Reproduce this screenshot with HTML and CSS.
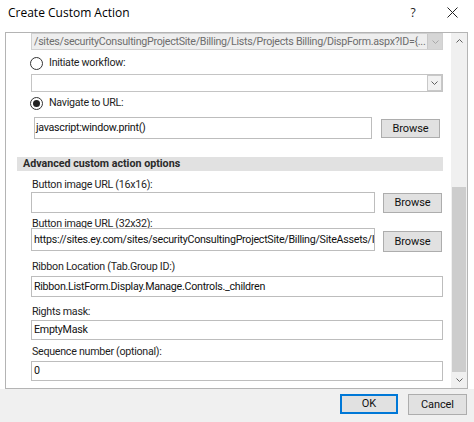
FILE: index.html
```html
<!DOCTYPE html>
<html>
<head>
<meta charset="utf-8">
<link rel="stylesheet" href="styles.css">
</head>
<body>
<div class="dialog">
  <div class="titlebar">
    <span class="title">Create Custom Action</span>
    <span class="help">?</span>
    <span class="close"><svg width="11" height="11" viewBox="0 0 11 11"><path d="M0.5 0.5 L10.5 10.5 M10.5 0.5 L0.5 10.5" stroke="#222" stroke-width="1" fill="none"/></svg></span>
  </div>
  <div class="panel">
    <div class="scroll">
      <div class="content">
        <div class="combo disabled r-top">
          <span class="combo-text">/sites/securityConsultingProjectSite/Billing/Lists/Projects Billing/DispForm.aspx?ID={...</span>
          <span class="combo-btn dis"><svg width="7" height="4" viewBox="0 0 7 4"><path d="M0.5 0.5 L3.5 3.5 L6.5 0.5" stroke="#a8a8a8" fill="none"/></svg></span>
        </div>
        <label class="radio-row r-radio1"><span class="radio"></span><span>Initiate workflow:</span></label>
        <div class="combo r-combo">
          <span class="combo-text"></span>
          <span class="combo-btn"><svg width="7" height="4" viewBox="0 0 7 4"><path d="M0.5 0.5 L3.5 3.5 L6.5 0.5" stroke="#606060" fill="none"/></svg></span>
        </div>
        <label class="radio-row r-radio2"><span class="radio checked"></span><span>Navigate to URL:</span></label>
        <div class="browse-row r-url">
          <div class="input url">javascript:window.print()</div>
          <button class="btn browse b-url">Browse</button>
        </div>
        <div class="section">Advanced custom action options</div>
        <div class="label r-l1">Button image URL (16x16):</div>
        <div class="browse-row r-f1">
          <div class="input short"></div>
          <button class="btn browse b-f1">Browse</button>
        </div>
        <div class="label r-l2">Button image URL (32x32):</div>
        <div class="browse-row r-f2">
          <div class="input short tall">https://sites.ey.com/sites/securityConsultingProjectSite/Billing/SiteAssets/I</div>
          <button class="btn browse b-f2">Browse</button>
        </div>
        <div class="label r-l3">Ribbon Location (Tab.Group ID:)</div>
        <div class="input full r-f3">Ribbon.ListForm.Display.Manage.Controls._children</div>
        <div class="label r-l4">Rights mask:</div>
        <div class="input full r-f4">EmptyMask</div>
        <div class="label r-l5">Sequence number (optional):</div>
        <div class="input full r-f5">0</div>
      </div>
    </div>
    <div class="scrollbar">
      <div class="sb-arrow"><svg width="7" height="4" viewBox="0 0 7 4"><path d="M0.5 3.5 L3.5 0.5 L6.5 3.5" stroke="#606060" fill="none"/></svg></div>
      <div class="sb-track"><div class="sb-thumb"></div></div>
      <div class="sb-arrow"><svg width="7" height="4" viewBox="0 0 7 4"><path d="M0.5 0.5 L3.5 3.5 L6.5 0.5" stroke="#606060" fill="none"/></svg></div>
    </div>
  </div>
  <div class="footer">
    <button class="btn ok">OK</button>
    <button class="btn cancel">Cancel</button>
  </div>
</div>
</body>
</html>
```

FILE: styles.css
```css
* { box-sizing: border-box; }
html, body { margin: 0; padding: 0; }
body {
  width: 474px;
  height: 422px;
  overflow: hidden;
  background: #ffffff;
  font-family: Roboto, "Open Sans", sans-serif;
  font-size: 10.7px;
  letter-spacing: -0.28px;
  color: #1e1e1e;
}
.dialog {
  width: 474px;
  height: 422px;
  display: flex;
  flex-direction: column;
  background: #ffffff;
}
.titlebar {
  height: 32px;
  display: flex;
  align-items: flex-start;
  padding: 4px 0 0 8px;
  letter-spacing: 0;
}
.title {
  flex: 1;
  font-family: "Open Sans", sans-serif;
  font-size: 12px;
  line-height: 17px;
  color: #000;
}
.help {
  width: 20px;
  text-align: center;
  font-family: "Open Sans", sans-serif;
  font-size: 12px;
  line-height: 17px;
  margin-right: 19px;
  color: #222;
}
.close {
  width: 20px;
  height: 17px;
  display: flex;
  align-items: center;
  justify-content: center;
  margin-right: 12px;
}
.panel {
  margin-left: 5px;
  width: 463px;
  height: 357px;
  border: 1px solid #b4b4b4;
  display: flex;
  background: #fff;
}
.scroll {
  flex: 1;
  overflow: hidden;
}
.content {
  display: flex;
  flex-direction: column;
  align-items: flex-start;
  padding-left: 25px;
}
.combo {
  width: 412px;
  display: flex;
  align-items: center;
  border: 1px solid #c4c4c4;
  background: #fff;
  padding: 0 0 0 2px;
}
.combo.disabled {
  background: #eeeeee;
  border-color: #d0d0d0;
  color: #6d6d6d;
  height: 17px;
}
.combo-text {
  flex: 1;
  white-space: nowrap;
  overflow: hidden;
  line-height: 15px;
}
.combo-btn {
  width: 15px;
  height: 15px;
  display: flex;
  align-items: center;
  justify-content: center;
  border-left: 1px solid #d0d0d0;
  background: #f2f2f2;
}
.combo-btn.dis {
  background: #d6d6d6;
  border-left: 1px solid #c8c8c8;
  height: 15px;
}
.r-combo { margin-top: 4px; height: 18px; }
.r-combo .combo-btn { height: 16px; margin-right: 0; border: 1px solid #c8c8c8; }
.radio-row {
  display: flex;
  align-items: center;
  gap: 6px;
  height: 14px;
  line-height: 14px;
  margin-left: -1px;
}
.radio {
  width: 13px;
  height: 13px;
  border: 1px solid #333;
  border-radius: 50%;
  display: flex;
  align-items: center;
  justify-content: center;
  background: #fff;
}
.radio.checked::after {
  content: "";
  width: 7px;
  height: 7px;
  border-radius: 50%;
  background: #222;
}
.r-radio1 { margin-top: 6px; }
.r-radio2 { margin-top: 4px; }
.browse-row {
  display: flex;
  align-items: flex-start;
}
.input {
  border: 1px solid #bdbdbd;
  background: #fff;
  height: 21px;
  line-height: 19px;
  padding: 0 2px;
  white-space: nowrap;
  overflow: hidden;
  color: #111;
}
.input.url { width: 338px; height: 22px; line-height: 20px; padding-left: 1px; }
.r-url { margin-top: 7px; margin-left: 3px; }
.input.short { width: 344px; }
.input.tall { height: 23px; line-height: 21px; }
.input.full { width: 412px; }
.btn {
  font-family: inherit;
  font-size: 11px;
  letter-spacing: -0.1px;
  color: #111;
  background: #e1e1e1;
  border: 1px solid #adadad;
  padding: 0;
  margin: 0;
  height: 20px;
  line-height: 18px;
}
.browse { width: 59px; }
.b-url { margin-left: 9px; margin-top: 2px; height: 19px; }
.b-f1 { margin-left: 8px; margin-top: 1px; }
.b-f2 { margin-left: 8px; margin-top: 3px; height: 21px; }
.section {
  margin-top: 18px;
  margin-left: -14px;
  width: 426px;
  height: 14px;
  line-height: 14px;
  background: #e1e1e1;
  font-weight: bold;
  letter-spacing: 0;
  padding-left: 6px;
  color: #2a2a2a;
}
.label {
  height: 13px;
  line-height: 13px;
  padding-left: 1px;
  color: #1e1e1e;
}
.r-l1 { margin-top: 7px; }
.r-f1 { margin-top: 1px; }
.r-l2 { margin-top: 4px; }
.r-f2 { margin-top: -2px; }
.r-l3 { margin-top: 8px; }
.r-f3 { margin-top: 3px; }
.r-l4 { margin-top: 8px; }
.r-f4 { margin-top: 2px; height: 20px; line-height: 18px; }
.r-l5 { margin-top: 5px; }
.r-f5 { margin-top: 3px; height: 20px; line-height: 18px; }
.scrollbar {
  width: 16px;
  display: flex;
  flex-direction: column;
  background: #f0f0f0;
}
.sb-arrow {
  height: 17px;
  display: flex;
  align-items: center;
  justify-content: center;
}
.sb-track {
  flex: 1;
  display: flex;
  flex-direction: column;
  padding: 0 1px;
}
.sb-thumb {
  margin-top: 138px;
  height: 185px;
  background: #cdcdcd;
}
.footer {
  flex: 1;
  background: #f0f0f0;
  display: flex;
  justify-content: flex-end;
  align-items: flex-start;
  gap: 10px;
  padding: 5px 7px 0 0;
}
.ok { width: 58px; height: 20px; border: 2px solid #0078d7; line-height: 16px; }
.cancel { width: 59px; height: 21px; }
```
